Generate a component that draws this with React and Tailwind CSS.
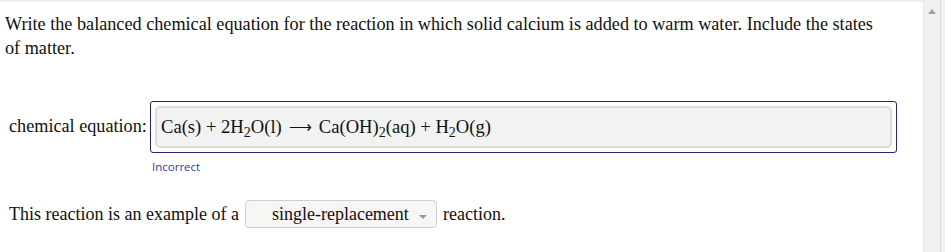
export default function App() {
  const serif = { fontFamily: '"Liberation Serif", "Times New Roman", serif' }
  return (
    <div className="flex h-[252px] w-[945px] overflow-hidden bg-white">
      <div className="flex w-[923px] flex-col border-t-2 border-[#efefef]" style={serif}>
        <p className="w-[875px] pl-[5px] pt-[10px] text-[18.2px] leading-6 text-[#111]">
          Write the balanced chemical equation for the reaction in which solid calcium is added to warm water. Include the states of matter.
        </p>

        <div className="mt-[41px] flex items-center">
          <span className="w-[150px] shrink-0 pl-[9px] text-[18.2px] text-[#111]">chemical equation:</span>
          <div className="h-[52px] w-[747px] rounded-[3px] border border-[#2b2080] p-[4px]">
            <div className="flex h-full items-center rounded-[5px] border-2 border-[#dcdcdc] bg-[#f2f2f2] pl-[4px] text-[18.6px] text-[#111]">
              Ca(s) + 2H<sub className="relative top-[6px] text-[14px]">2</sub>O(l)
              <span className="mx-[7px] text-[16px]">⟶</span>
              Ca(OH)<sub className="relative top-[6px] text-[14px]">2</sub>(aq) + H<sub className="relative top-[6px] text-[14px]">2</sub>O(g)
            </div>
          </div>
        </div>
        <div className="mt-[5px] pl-[152px] text-[11.5px] text-[#3a35b0]" style={{ fontFamily: '"Open Sans", sans-serif' }}>
          Incorrect
        </div>

        <div className="mt-[25px] flex items-center text-[18px] text-[#111]">
          <span className="pl-[9px]">This reaction is an example of a</span>
          <div className="ml-[6px] flex h-[28px] w-[192px] items-center rounded-[4px] border border-[#cfcfcf] bg-[#f7f6f4] pl-[26px]">
            <span>single-replacement</span>
            <svg className="ml-[10px] mt-[6px]" width="8" height="5" viewBox="0 0 8 5">
              <path d="M0 0 L8 0 L4 4 Z" fill="#999" />
            </svg>
          </div>
          <span className="ml-[6px]">reaction.</span>
        </div>
      </div>

      <div className="flex h-full w-[17px] justify-center border-l border-[#e6e6e6] bg-[#f1f1f1] pt-[9px]">
        <svg width="8" height="5" viewBox="0 0 8 5">
          <path d="M0 5 L8 5 L4 0 Z" fill="#a3a3a3" />
        </svg>
      </div>
      <div className="h-full w-[1px] bg-[#dcdcdc]" />
      <div className="h-full flex-1 bg-[#f1f1f1]" />
    </div>
  )
}
